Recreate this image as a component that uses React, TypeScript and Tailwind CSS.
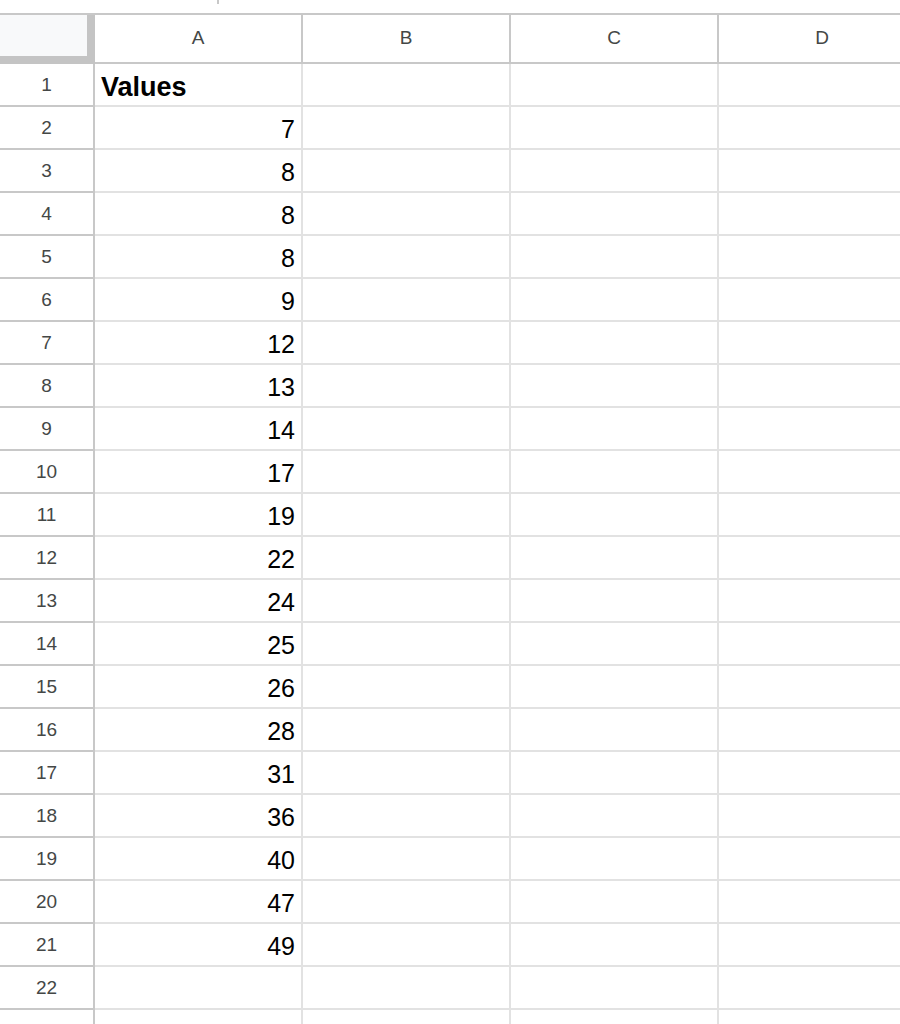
import React from "react";

const values: (number | null)[] = [7, 8, 8, 8, 9, 12, 13, 14, 17, 19, 22, 24, 25, 26, 28, 31, 36, 40, 47, 49, null];
const cols = ["A", "B", "C", "D"];

export default function App() {
  const rows: { n: number; a: React.ReactNode; bold?: boolean }[] = [
    { n: 1, a: "Values", bold: true },
    ...values.map((v, i) => ({ n: i + 2, a: v === null ? "" : String(v) })),
    { n: 23, a: "" },
  ];
  return (
    <div className="w-[900px] h-[1024px] overflow-hidden bg-white font-['Liberation_Sans',Arial,sans-serif] relative">
      <div className="absolute left-[217px] top-0 w-[2px] h-[4px] bg-[#c8c8c8]" />
      <div className="h-[13px]" />
      <div className="h-[2px] bg-[#c8c8c8] w-[1100px]" />
      {/* header row */}
      <div className="flex h-[49px] w-[1100px]">
        <div className="w-[95px] shrink-0 flex flex-col">
          <div className="flex flex-1">
            <div className="w-[87px] bg-[#f8f9fa]" />
            <div className="w-[8px] bg-[#c4c4c4]" />
          </div>
          <div className="h-[8px] bg-[#c4c4c4]" />
        </div>
        {cols.map((c) => (
          <div
            key={c}
            className="w-[208px] border-r-2 border-[#c8c8c8] shrink-0 flex items-center justify-center text-[19px] text-[#444746] border-b-2 border-b-[#c8c8c8]"
          >
            {c}
          </div>
        ))}
      </div>
      {rows.map((r) => (
        <div key={r.n} className="flex h-[43px] w-[1100px]">
          <div className="w-[95px] shrink-0 border-r-2 border-r-[#c8c8c8] border-b-2 border-b-[#c8c8c8] flex items-center justify-center text-[19px] text-[#444746] pt-[1px]">
            {r.n}
          </div>
          <div
            className={`w-[208px] shrink-0 border-r-2 border-b-2 border-[#e2e2e2] flex items-end ${
              r.bold ? "justify-start pl-[6px] font-bold text-[27px] pb-[4px]" : "justify-end pr-[6px] text-[25px] pb-[6px]"
            } leading-none text-black`}
          >
            {r.a}
          </div>
          <div className="w-[208px] shrink-0 border-r-2 border-b-2 border-[#e2e2e2]" />
          <div className="w-[208px] shrink-0 border-r-2 border-b-2 border-[#e2e2e2]" />
          <div className="w-[208px] shrink-0 border-r-2 border-b-2 border-[#e2e2e2]" />
        </div>
      ))}
    </div>
  );
}
